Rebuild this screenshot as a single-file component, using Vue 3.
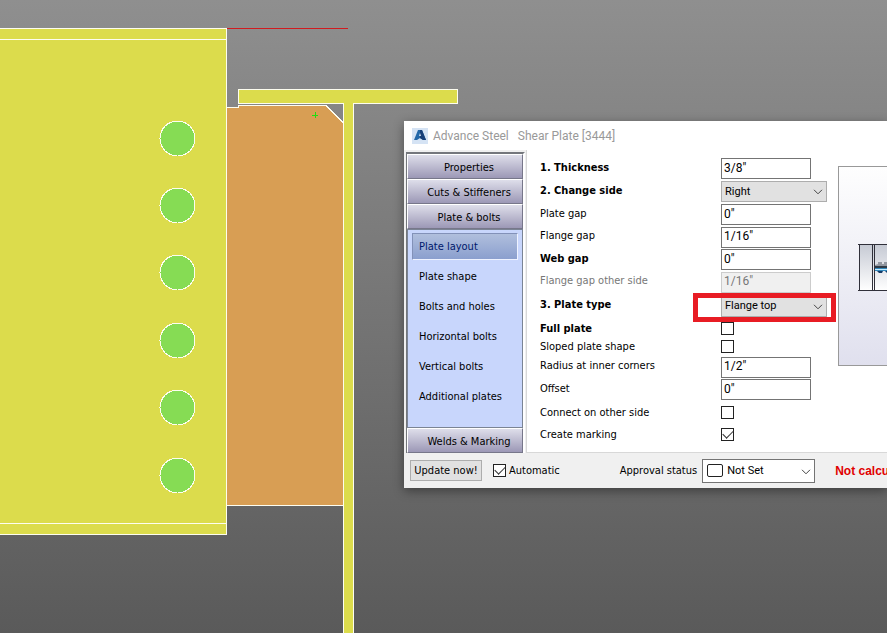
<script setup>
import { ref } from 'vue'

const bolts = [138, 205, 272, 340, 407, 475]

const sections = ['Properties', 'Cuts & Stiffeners', 'Plate & bolts']
const pages = [
  'Plate layout',
  'Plate shape',
  'Bolts and holes',
  'Horizontal bolts',
  'Vertical bolts',
  'Additional plates',
]
const activePage = ref('Plate layout')

const fields = ref([
  { id: 'thickness', label: '1. Thickness', kind: 'text', value: '3/8"', bold: true },
  { id: 'side', label: '2. Change side', kind: 'select', value: 'Right', options: ['Right', 'Left'], bold: true },
  { id: 'plate-gap', label: 'Plate gap', kind: 'text', value: '0"' },
  { id: 'flange-gap', label: 'Flange gap', kind: 'text', value: '1/16"' },
  { id: 'web-gap', label: 'Web gap', kind: 'text', value: '0"', bold: true },
  { id: 'flange-gap-other', label: 'Flange gap other side', kind: 'text', value: '1/16"', disabled: true },
  { id: 'plate-type', label: '3. Plate type', kind: 'select', value: 'Flange top', options: ['Flange top', 'Full'], bold: true, marked: true },
  { id: 'full-plate', label: 'Full plate', kind: 'check', value: false, bold: true },
  { id: 'sloped', label: 'Sloped plate shape', kind: 'check', value: false },
  { id: 'radius', label: 'Radius at inner corners', kind: 'text', value: '1/2"' },
  { id: 'offset', label: 'Offset', kind: 'text', value: '0"' },
  { id: 'connect', label: 'Connect on other side', kind: 'check', value: false },
  { id: 'marking', label: 'Create marking', kind: 'check', value: true },
])
const automatic = ref(true)
const approval = ref('Not Set')
</script>

<template>
  <main class="viewport">
    <svg class="model" aria-hidden="true" shape-rendering="crispEdges">
      <g stroke="#fdfdf0" stroke-width="1">
        <path d="M226.500 107.500H238.500V105.500H326L343.500 123V505.500H226.500Z" fill="#d89e54" />
        <path d="M238.500 89.500H457.500V103.500H353.500V2000H343.500V103.500H238.500Z" fill="#dcdc4c" />
        <rect x="-5" y="28.500" width="231.500" height="506" fill="#dcdc4c" />
        <path d="M0 39.500H226M0 523.500H226" />
        <circle v-for="y in bolts" :key="y" cx="177.500" :cy="y + 0.5" r="17.500" fill="#86dc54" />
      </g>
      <path d="M227 28.500H348" stroke="#d01c20" />
      <g fill="#20e010">
        <rect x="312" y="115" width="6" height="1" />
        <rect x="315" y="112" width="1" height="6" />
      </g>
    </svg>

    <section class="dialog" aria-label="Advance Steel Shear Plate">
      <header class="titlebar">
        <svg class="logo" viewBox="0 0 16 16" aria-hidden="true">
          <rect width="16" height="16" fill="#d5e3f4" />
          <path d="M6 2H10L14 12H11L8 10L5 12H2Z" fill="#2468a8" />
          <path d="M8 2H10L14 12H11L8 10Z" fill="#173f78" />
          <path d="M8 5L9 8H7Z" fill="#d5e3f4" />
        </svg>
        <span>Advance Steel</span>
        <span>Shear Plate [3444]</span>
      </header>

      <div class="body">
        <nav class="sidebar">
          <button v-for="s in sections" :key="s" type="button" class="section">{{ s }}</button>
          <div class="pages">
            <button
              v-for="p in pages"
              :key="p"
              type="button"
              class="page"
              :class="{ active: p === activePage }"
              @click="activePage = p"
            >{{ p }}</button>
          </div>
          <button type="button" class="section">Welds &amp; Marking</button>
        </nav>

        <div class="content">
          <form class="form" @submit.prevent>
            <template v-for="f in fields" :key="f.id">
              <label :for="f.id" :class="[f.kind, { bold: f.bold, disabled: f.disabled }]">{{ f.label }}</label>
              <input v-if="f.kind === 'text'" :id="f.id" v-model="f.value" type="text" class="textbox" :disabled="f.disabled" />
              <input v-else-if="f.kind === 'check'" :id="f.id" v-model="f.value" type="checkbox" class="tick" />
              <div v-else class="picker" :class="{ marked: f.marked }">
                <select :id="f.id" v-model="f.value">
                  <option v-for="o in f.options" :key="o">{{ o }}</option>
                </select>
                <svg class="chevron" viewBox="0 0 10 6" aria-hidden="true"><path d="M1 .8L5 4.800L9 .8" /></svg>
              </div>
            </template>
          </form>
          <div class="preview">
            <svg viewBox="0 0 60 50" aria-hidden="true">
              <defs>
                <linearGradient id="steel" x1="0" y1="0" x2="0" y2="1">
                  <stop offset="0" stop-color="#c6cad4" />
                  <stop offset="1" stop-color="#ffffff" />
                </linearGradient>
              </defs>
              <rect x="1.500" y="1.500" width="58" height="46" fill="url(#steel)" />
              <path d="M0 1.500H60M0 47.500H60M1.500 1V48" stroke="#30303a" fill="none" />
              <path d="M14.500 1V48M16.500 1V48" stroke="#30303a" fill="none" />
              <path d="M17 22L20 21V19H24V21H26V19H30V21H60V23H17Z" fill="#9297a0" />
              <path d="M17 23H60V25H17Z" fill="#303c48" />
              <path d="M17 25H60V28H17Z" fill="#3288bc" />
              <path d="M17 26.500H60" stroke="#c4ecff" />
              <path d="M19 28H25L24 30H21ZM27 28H33L32 30H29ZM35 28H60V30H37Z" fill="#143b68" />
            </svg>
          </div>
        </div>
      </div>

      <footer class="footer">
        <button type="button" class="update">Update now!</button>
        <label class="auto"><input v-model="automatic" type="checkbox" class="tick" />Automatic</label>
        <label for="approval" class="approval">Approval status</label>
        <div class="picker status">
          <select id="approval" v-model="approval">
            <option>Not Set</option>
            <option>Approved</option>
          </select>
          <i class="swatch"></i>
          <svg class="chevron" viewBox="0 0 10 6" aria-hidden="true"><path d="M1 .8L5 4.800L9 .8" /></svg>
        </div>
        <strong class="warning">Not calculated</strong>
      </footer>
    </section>
  </main>
</template>

<style>
body {
  margin: 0;
}
</style>

<style scoped>
* {
  box-sizing: border-box;
}
.viewport {
  position: relative;
  min-height: 100vh;
  overflow: hidden;
  background: linear-gradient(#8f8f8f, #5a5a5a);
  font: 11px/14px "DejaVu Sans Condensed", "Noto Sans", sans-serif;
  color: #000;
}
button,
input,
select {
  font: inherit;
  color: inherit;
  margin: 0;
}
.model {
  position: absolute;
  inset: 0;
  width: 100%;
  height: 100%;
}
.dialog {
  position: absolute;
  left: 404px;
  top: 121px;
  right: 0;
  background: #f0f0f0;
  box-shadow: 0 3px 10px rgba(0, 0, 0, 0.4);
  overflow: hidden;
  white-space: nowrap;
}
.titlebar {
  display: flex;
  align-items: center;
  gap: 9px;
  height: 29px;
  padding-left: 8px;
  background: #fff;
  color: #999;
  font: 12px/16px Roboto, sans-serif;
}
.logo {
  width: 16px;
  height: 16px;
  margin-right: -4px;
}
.body {
  display: flex;
}
.sidebar {
  flex: none;
  display: flex;
  flex-direction: column;
  width: 119px;
  margin: 2px 0 0 2px;
  border: 2px solid #74777c;
  border-left-width: 1px;
  border-right-color: #fff;
  border-bottom: 0;
}
.section {
  height: 25px;
  padding: 3px 0 0 8px;
  border: 1px solid #77778a;
  border-top-color: #fff;
  border-left-color: #fff;
  background: linear-gradient(#dedeea, #9c98b6);
}
.pages {
  flex: 1;
  display: flex;
  flex-direction: column;
  gap: 3px;
  padding: 3px 4px 15px;
  border: 1px solid #fff;
  outline: 1px solid #7b8494;
  outline-offset: -1px;
  background: #c8d6fc;
}
.page {
  height: 27px;
  padding: 0 0 0 6px;
  border: 1px solid transparent;
  background: none;
  text-align: left;
}
.page.active {
  border-color: #8291b8 #eef2ff #eef2ff #8291b8;
  background: linear-gradient(#b0bfdd, #8b9fce);
  color: #00186c;
}
.content {
  flex: 1;
  min-width: 0;
  display: flex;
  align-items: flex-start;
  gap: 11px;
  margin-left: 1px;
  padding: 7px 0 8px 13px;
  border-left: 1px solid #d8d8d8;
  border-bottom: 1px solid #d8d8d8;
  background: #fff;
}
.form {
  flex: none;
  display: grid;
  grid-template-columns: 181px 106px;
  grid-template-rows: 23px 23px 23px 22px 23px 22px 26px 18px 19px 22px 23px 23px 20px;
  align-items: center;
}
.form label {
  padding-bottom: 2px;
}
.form label.check {
  padding: 1px 0 0;
}
.bold {
  font-weight: bold;
}
.disabled {
  color: #777;
}
.textbox {
  width: 90px;
  height: 21px;
  padding: 0 2px 2px;
  border: 1px solid #747474;
  background: #fff;
  font: 12px/16px Roboto, sans-serif;
}
.textbox:disabled {
  border-color: #ccc;
  background: #f0f0f0;
  color: #777;
}
.tick {
  appearance: none;
  width: 13px;
  height: 13px;
  border: 1px solid #222;
  background: #fff;
}
.tick:checked::after {
  content: "";
  display: block;
  width: 9px;
  height: 5px;
  margin: 1px;
  border: solid #333;
  border-width: 0 0 1px 1px;
  transform: rotate(-45deg);
}
.picker {
  position: relative;
}
.picker select {
  display: block;
  appearance: none;
  width: 100%;
  height: 21px;
  padding: 0 20px 0 3px;
  border: 1px solid #adadad;
  border-radius: 0;
  background: #e1e1e1;
  font: 11px/16px Roboto, sans-serif;
}
.chevron {
  position: absolute;
  right: 4px;
  top: 8px;
  width: 10px;
  height: 6px;
  fill: none;
  stroke: #444;
  pointer-events: none;
}
.marked::after {
  content: "";
  position: absolute;
  inset: -3px -9px -5px -28px;
  z-index: 1;
  border: 5px solid #e81c24;
  pointer-events: none;
}
.preview {
  flex: 1;
  min-width: 0;
  height: 200px;
  margin-top: 9px;
  padding: 76px 0 0 19px;
  border: 1px solid #999;
  border-right: 0;
  background: linear-gradient(#fefefe, #e0e0ee);
  overflow: hidden;
}
.preview svg {
  display: block;
  width: 60px;
  height: 50px;
}
.footer {
  display: flex;
  align-items: center;
  height: 35px;
  padding-left: 6px;
}
.update {
  flex: none;
  width: 72px;
  height: 21px;
  padding: 0;
  border: 1px solid #adadad;
  background: #e1e1e1;
}
.auto {
  display: flex;
  align-items: center;
  gap: 3px;
  margin-left: 11px;
}
.approval {
  margin-left: 60px;
}
.status {
  flex: none;
  width: 113px;
  margin-left: 5px;
}
.picker.status select {
  height: 24px;
  padding-left: 24px;
  border-color: #747474;
  background: #fff;
}
.status .chevron {
  top: 10px;
}
.swatch {
  position: absolute;
  left: 5px;
  top: 5px;
  width: 16px;
  height: 13px;
  border: 1px solid #222;
  border-radius: 2px;
  pointer-events: none;
}
.warning {
  margin-left: 20px;
  color: #e00000;
  font: bold 12px/16px "Liberation Sans", sans-serif;
}
</style>
